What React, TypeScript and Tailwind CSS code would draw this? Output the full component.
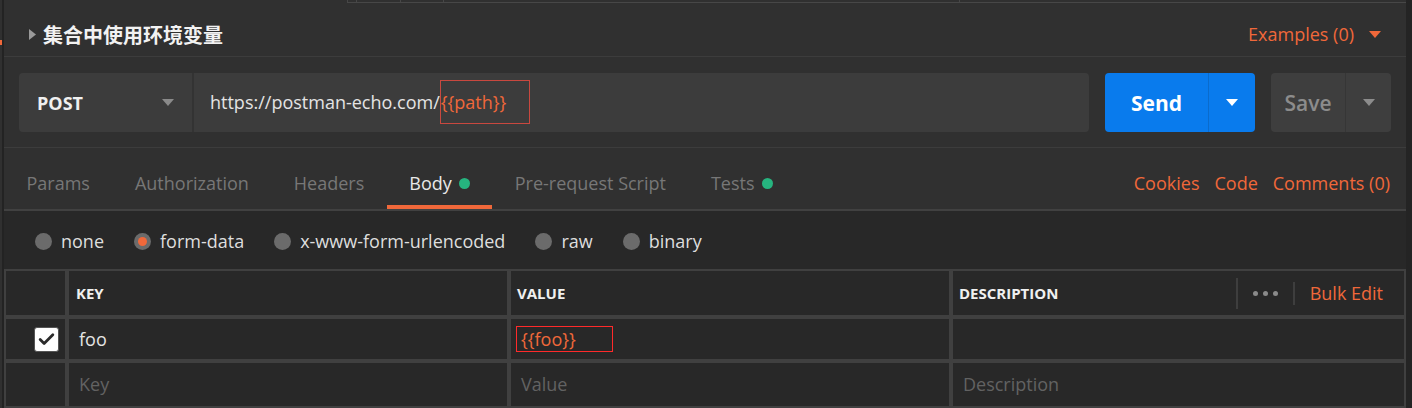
import { Check } from "lucide-react";

const ORANGE = "text-[#f0683a]";

function Caret({ className }: { className: string }) {
  return (
    <svg width="12" height="7" viewBox="0 0 12 7" className={className}>
      <path d="M0 0h12L6 7z" fill="currentColor" />
    </svg>
  );
}

function Radio({ label, checked }: { label: string; checked?: boolean }) {
  return (
    <div className="flex items-center gap-[9px]">
      <span className="flex h-[17px] w-[17px] items-center justify-center rounded-full bg-[#6b6b6b]">
        {checked ? <span className="h-[9px] w-[9px] rounded-full bg-[#f0683a]" /> : null}
      </span>
      <span className="text-[18px] text-[#dedede]">{label}</span>
    </div>
  );
}

function Tab({ label, active, dot }: { label: string; active?: boolean; dot?: boolean }) {
  return (
    <div className="relative flex h-full items-center px-[22.5px] pt-[9px]">
      <span className={active ? "text-[18px] text-[#e8e8e8]" : "text-[18px] text-[#777777]"}>{label}</span>
      {dot ? <span className="ml-[7px] h-[11px] w-[11px] rounded-full bg-[#26b47f]" /> : null}
      {active ? <span className="absolute bottom-0 left-0 right-0 h-[4px] bg-[#f0683a]" /> : null}
    </div>
  );
}

export default function App() {
  return (
    <div className="flex h-[408px] w-[1412px] overflow-hidden bg-[#2b2b2b] font-['Open_Sans','Noto_Sans_CJK_SC',sans-serif]">
      {/* left edge */}
      <div className="flex w-[4px] shrink-0 border-r-[2px] border-[#232323] bg-[#303030]">
        <div className="mt-[40px] h-[5px] w-[2px] bg-[#f0683a]" />
      </div>

      <div className="flex w-[1402px] shrink-0 flex-col">
        <div className="bg-[#303030]">
          {/* top strip */}
          <div className="flex h-[12px]">
            <div className="h-[3px] w-[343px]" />
            <div className="flex h-[3px] flex-1 border-b border-l border-[#474747]">
              <div className="w-[9px] border-r border-[#474747]" />
              <div className="w-[44px] border-r border-[#474747]" />
              <div className="w-[43px] border-r border-[#474747]" />
              <div className="w-[516px] border-r border-[#474747]" />
            </div>
          </div>

          {/* title row */}
          <div className="flex h-[45px] items-center border-b border-[#3c3c3c] pl-[25px] pr-[25px] pt-[1px]">
            <svg width="7" height="11" viewBox="0 0 7 11" className="text-[#9a9a9a]">
              <path d="M0 0l7 5.5L0 11z" fill="currentColor" />
            </svg>
            <span className="ml-[7px] font-['Noto_Sans_CJK_SC',sans-serif] text-[20px] font-bold text-[#f2f2f2]">
              集合中使用环境变量
            </span>
            <div className="ml-auto flex items-center gap-[15px]">
              <span className={`text-[18px] ${ORANGE}`}>Examples (0)</span>
              <Caret className={ORANGE} />
            </div>
          </div>

          {/* request row */}
          <div className="flex h-[91px] items-center gap-[16px] border-b border-[#3c3c3c] px-[15px]">
            <div className="flex h-[59px] flex-1 overflow-hidden rounded-[4px]">
              <div className="flex w-[173px] items-center justify-between bg-[#3c3c3c] pl-[18px] pr-[18px]">
                <span className="pt-[2px] text-[18px] font-bold text-[#f0f0f0]">POST</span>
                <Caret className="text-[#8a8a8a]" />
              </div>
              <div className="w-[2px] bg-[#333333]" />
              <div className="flex flex-1 items-center bg-[#3c3c3c] pl-[16px]">
                <span className="pt-[1px] text-[18px] text-[#e4e4e4]">https://postman-echo.com/</span>
                <span className="flex h-[44px] w-[90px] items-center border border-[#c9483f] pt-[1px]">
                  <span className={`text-[18px] ${ORANGE}`}>{"{{path}}"}</span>
                </span>
              </div>
            </div>
            <div className="flex h-[59px] w-[150px] overflow-hidden rounded-[4px] bg-[#097bed]">
              <div className="flex w-[104px] items-center justify-center border-r border-[#0a6bcc] pt-[3px]">
                <span className="text-[21px] font-bold text-white">Send</span>
              </div>
              <div className="flex flex-1 items-center justify-center">
                <Caret className="text-white" />
              </div>
            </div>
            <div className="flex h-[59px] w-[120px] overflow-hidden rounded-[4px] bg-[#3e3e3e]">
              <div className="flex w-[75px] items-center justify-center border-r border-[#363636] pt-[3px]">
                <span className="text-[21px] font-semibold text-[#8c8c8c]">Save</span>
              </div>
              <div className="flex flex-1 items-center justify-center">
                <Caret className="text-[#8c8c8c]" />
              </div>
            </div>
          </div>

          {/* tabs row */}
          <div className="flex h-[63px] items-stretch border-b-[2px] border-[#414141]">
            <Tab label="Params" />
            <Tab label="Authorization" />
            <Tab label="Headers" />
            <Tab label="Body" active dot />
            <Tab label="Pre-request Script" />
            <Tab label="Tests" dot />
            <div className={`ml-auto flex items-center gap-[15px] pr-[16px] pt-[9px] text-[18px] ${ORANGE}`}>
              <span>Cookies</span>
              <span>Code</span>
              <span>Comments (0)</span>
            </div>
          </div>
        </div>

        {/* body */}
        <div className="flex flex-1 flex-col bg-[#282828]">
          <div className="flex h-[58px] items-center gap-[30px] pl-[31px] pt-[2px]">
            <Radio label="none" />
            <Radio label="form-data" checked />
            <Radio label="x-www-form-urlencoded" />
            <Radio label="raw" />
            <Radio label="binary" />
          </div>

          <div className="grid grid-cols-[59px_438px_438px_1fr] grid-rows-[44px_40px_43px] gap-[4px] bg-[#404040] p-[2px]">
            <div className="bg-[#282828]" />
            <div className="flex items-center bg-[#282828] pl-[7px] text-[15px] font-bold text-[#f0f0f0]">KEY</div>
            <div className="flex items-center bg-[#282828] pl-[6px] text-[15px] font-bold text-[#f0f0f0]">VALUE</div>
            <div className="flex items-center bg-[#282828] pl-[6px] pr-[21px]">
              <span className="text-[15px] font-bold text-[#f0f0f0]">DESCRIPTION</span>
              <div className="ml-auto flex items-center">
                <div className="h-[31px] w-[2px] bg-[#3e3e3e]" />
                <div className="mx-[15px] flex gap-[5px]">
                  <span className="h-[5px] w-[5px] rounded-full bg-[#8a8a8a]" />
                  <span className="h-[5px] w-[5px] rounded-full bg-[#8a8a8a]" />
                  <span className="h-[5px] w-[5px] rounded-full bg-[#8a8a8a]" />
                </div>
                <div className="h-[23px] w-[2px] bg-[#3e3e3e]" />
                <span className={`ml-[15px] text-[18px] ${ORANGE}`}>Bulk Edit</span>
              </div>
            </div>

            <div className="flex items-center bg-[#282828] pl-[28px]">
              <span className="flex h-[25px] w-[25px] items-center justify-center rounded-[3px] border border-[#555555] bg-white">
                <Check size={19} strokeWidth={3.5} className="text-[#2b2b2b]" />
              </span>
            </div>
            <div className="flex items-center bg-[#282828] pl-[10px] text-[18px] text-[#e4e4e4]">foo</div>
            <div className="flex items-center bg-[#282828] pl-[5px]">
              <span className="flex h-[26px] w-[97px] items-center border border-[#ff2a2a] pl-[4px]">
                <span className={`text-[18px] ${ORANGE}`}>{"{{foo}}"}</span>
              </span>
            </div>
            <div className="bg-[#282828]" />

            <div className="bg-[#282828]" />
            <div className="flex items-center bg-[#282828] pl-[10px] text-[18px] text-[#626262]">Key</div>
            <div className="flex items-center bg-[#282828] pl-[10px] text-[18px] text-[#626262]">Value</div>
            <div className="flex items-center bg-[#282828] pl-[10px] text-[18px] text-[#626262]">Description</div>
          </div>
        </div>
      </div>

      {/* right edge */}
      <div className="w-[6px] shrink-0 bg-[#242424]" />
    </div>
  );
}
